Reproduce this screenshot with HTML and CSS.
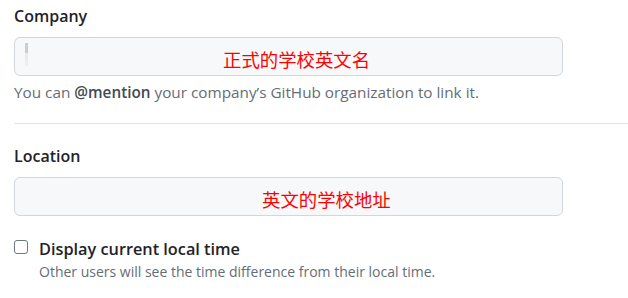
FILE: index.html
```html
<!DOCTYPE html>
<html>
<head>
<meta charset="utf-8">
<link rel="stylesheet" href="styles.css">
</head>
<body>
<div class="page">
  <div class="group">
    <label class="label">Company</label>
    <div class="input company">
      <span class="caret"></span>
      <span class="note note-company">正式的学校英文名</span>
    </div>
    <p class="hint">You can <strong>@mention</strong> your company’s GitHub organization to link it.</p>
  </div>
  <hr class="divider">
  <div class="group">
    <label class="label">Location</label>
    <div class="input location">
      <span class="note note-location">英文的学校地址</span>
    </div>
  </div>
  <div class="check">
    <span class="box"></span>
    <div class="check-text">
      <div class="check-label">Display current local time</div>
      <div class="check-hint">Other users will see the time difference from their local time.</div>
    </div>
  </div>
</div>
</body>
</html>
```
FILE: styles.css
```css
html, body {
  margin: 0;
  padding: 0;
  background: #ffffff;
}
.page {
  padding: 4px 0 0 14px;
  font-family: "Open Sans", "Liberation Sans", sans-serif;
  color: #1f2328;
}
.group {
  display: flex;
  flex-direction: column;
  margin-right: 65px;
}
.label {
  font-size: 16px;
  font-weight: 600;
  line-height: 24px;
  margin-bottom: 9px;
}
.input {
  height: 37px;
  border: 1px solid #d0d7de;
  border-radius: 6px;
  background: #f6f8fa;
  display: flex;
  align-items: center;
  position: relative;
}
.caret {
  position: absolute;
  left: 10px;
  top: 5px;
  width: 3px;
  height: 23px;
  background: linear-gradient(#c9ced6 0, #c9ced6 45%, #e6e9ed 45%, #eef0f3 100%);
}
.note {
  color: #ff0000;
  font-family: "Noto Sans CJK SC", sans-serif;
  font-size: 18.4px;
  line-height: 22px;
  padding-top: 5px;
}
.note-company { padding-left: 208px; }
.note-location { padding-left: 247px; }
.hint {
  margin: 6px 0 0;
  font-size: 15.3px;
  line-height: 21px;
  color: #656d76;
}
.hint strong {
  font-weight: 600;
  color: #424a53;
}
.divider {
  border: 0;
  border-top: 1px solid #e1e4e8;
  margin: 20px 0 20px;
}
.check {
  display: flex;
  align-items: flex-start;
  margin-top: 21px;
  gap: 11px;
}
.box {
  width: 12px;
  height: 12px;
  border: 1.5px solid #6e7781;
  border-radius: 3px;
  margin-top: 3px;
  background: #fff;
}
.check-label {
  font-size: 16.3px;
  font-weight: 600;
  line-height: 24px;
}
.check-hint {
  font-size: 14px;
  line-height: 20px;
  color: #656d76;
  margin-top: 1px;
}
```
